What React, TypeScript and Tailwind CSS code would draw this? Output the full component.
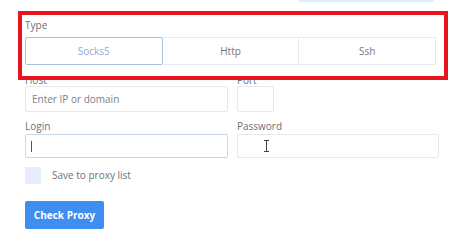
import React from "react";

const label = "h-[12px] text-[10px] leading-[12px] text-[#6b6f76]";
const field = "border border-[#e6e8ec] rounded-[2px] bg-white";

export default function App() {
  return (
    <div
      className="relative w-[474px] h-[244px] bg-white overflow-hidden"
      style={{ fontFamily: '"Open Sans", "Noto Sans", sans-serif' }}
    >
      <div className="flex flex-col px-[25px]">
        {/* bottom edge of something above */}
        <div className="ml-[274px] w-[135px] h-[2px] bg-[#dcf1f6]" />

        <div className={"mt-[17px] " + label}>Type</div>
        <div className="mt-[6px] flex w-[411px] h-[28px] text-[10px] text-[#777]">
          <div className="flex-1 flex items-center justify-center border border-[#a7c1de] rounded-[2px] text-[#8eabcf]">
            Socks5
          </div>
          <div className="flex-1 flex items-center justify-center border border-l-0 border-[#e8eaed]">
            Http
          </div>
          <div className="flex-1 flex items-center justify-center border border-l-0 border-[#e8eaed]">
            Ssh
          </div>
        </div>

        <div className="mt-[9px] flex gap-[9px]">
          <div className="flex flex-col w-[203px]">
            <div className={label}>Host</div>
            <div className={"h-[26px] flex items-center px-[6px] text-[10px] text-[#7c8088] " + field}>
              Enter IP or domain
            </div>
          </div>
          <div className="flex flex-col w-[37px]">
            <div className={label}>Port</div>
            <div className={"h-[26px] " + field} />
          </div>
        </div>

        <div className="mt-[8px] flex gap-[9px]">
          <div className="flex flex-col w-[203px]">
            <div className={label}>Login</div>
            <div className="mt-[2px] h-[24px] flex items-center pl-[5px] border border-[#c9d6e6] rounded-[2px]">
              <div className="w-px h-[11px] bg-[#555]" />
            </div>
          </div>
          <div className="flex flex-col w-[202px]">
            <div className={label}>Password</div>
            <div className={"mt-[2px] h-[24px] flex items-center pl-[25px] " + field}>
              <svg width="7" height="12" viewBox="0 0 7 12" fill="none" stroke="#444" strokeWidth="1">
                <path d="M1 0.5h5M3.5 0.5v11M1 11.5h5" />
              </svg>
            </div>
          </div>
        </div>

        <div className="mt-[9px] flex items-center h-[17px]">
          <div className="w-[16px] h-[17px] bg-[#e7eefb]" />
          <span className="ml-[11px] text-[10px] text-[#6e7178]">Save to proxy list</span>
        </div>

        <button className="mt-[17px] w-[79px] h-[28px] rounded-[2px] bg-[#3d8ef0] text-white text-[10px] font-bold">
          Check Proxy
        </button>
      </div>

      {/* red highlight overlay */}
      <div className="absolute left-[18px] top-[11px] w-[430px] h-[69px] border-[4px] border-[#e8141f]" />
    </div>
  );
}
